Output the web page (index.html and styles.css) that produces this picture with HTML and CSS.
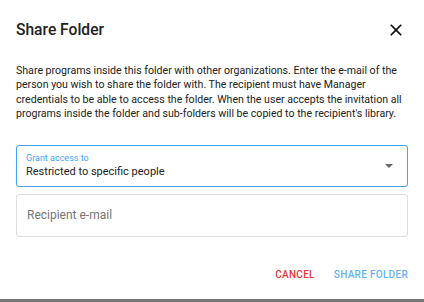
FILE: index.html
```html
<!DOCTYPE html>
<html>
<head>
<meta charset="utf-8">
<link rel="stylesheet" href="styles.css">
</head>
<body>
<div class="dialog">
  <div class="header">
    <h1 class="title">Share Folder</h1>
    <button class="close" aria-label="Close">
      <svg width="20" height="20" viewBox="0 0 24 24"><path d="M19 6.41 17.59 5 12 10.59 6.41 5 5 6.41 10.59 12 5 17.59 6.41 19 12 13.41 17.59 19 19 17.59 13.41 12z" fill="#111"/></svg>
    </button>
  </div>
  <p class="desc">Share programs inside this folder with other organizations. Enter the e-mail of the person you wish to share the folder with. The recipient must have Manager credentials to be able to access the folder. When the user accepts the invitation all programs inside the folder and sub-folders will be copied to the recipient's library.</p>
  <div class="select">
    <div class="select-text">
      <span class="label">Grant access to</span>
      <span class="value">Restricted to specific people</span>
    </div>
    <span class="arrow"></span>
  </div>
  <div class="input">Recipient e-mail</div>
  <div class="actions">
    <span class="btn cancel">CANCEL</span>
    <span class="btn share">SHARE FOLDER</span>
  </div>
</div>
<div class="shade"></div>
</body>
</html>
```
FILE: styles.css
```css
html, body {
  margin: 0;
  padding: 0;
  background: #fff;
}
body {
  font-family: Roboto, "Liberation Sans", sans-serif;
  width: 424px;
  height: 302px;
  overflow: hidden;
}
.dialog {
  height: 299px;
  box-sizing: border-box;
  padding: 19px 16px 0 16px;
  display: flex;
  flex-direction: column;
}
.header {
  display: flex;
  justify-content: space-between;
  align-items: center;
  height: 22px;
}
.title {
  margin: 0;
  font-size: 15.6px;
  font-weight: 500;
  color: #212121;
  line-height: 22px;
}
.close {
  border: 0;
  background: none;
  padding: 0;
  width: 20px;
  height: 20px;
  margin-right: 2px;
  display: flex;
}
.desc {
  margin: 23px 0 0 0;
  font-size: 10.6px;
  line-height: 14.3px;
  color: #212121;
}
.select {
  margin-top: 23.5px;
  height: 42.5px;
  box-sizing: border-box;
  border: 1.5px solid #42a5f5;
  border-radius: 3px;
  padding: 0 14px 0 9px;
  display: flex;
  align-items: center;
  justify-content: space-between;
}
.select-text {
  display: flex;
  flex-direction: column;
}
.label {
  font-size: 9px;
  line-height: 11px;
  color: #42a5f5;
}
.value {
  font-size: 11px;
  line-height: 15px;
  color: #212121;
}
.arrow {
  width: 0;
  height: 0;
  border-left: 4px solid transparent;
  border-right: 4px solid transparent;
  border-top: 4px solid #666;
  margin-top: 1px;
}
.input {
  margin-top: 6.5px;
  height: 43.5px;
  box-sizing: border-box;
  border: 1px solid #ddd;
  border-radius: 3px;
  padding: 0 10px;
  display: flex;
  align-items: center;
  font-size: 12px;
  color: #757575;
}
.actions {
  margin-top: 29.5px;
  display: flex;
  justify-content: flex-end;
  gap: 19px;
}
.btn {
  font-size: 10px;
  font-weight: 500;
  line-height: 16px;
  letter-spacing: 0.3px;
}
.cancel { color: #e53935; }
.share { color: #64b5f6; }
.shade {
  height: 3px;
  background: #777;
}
```
